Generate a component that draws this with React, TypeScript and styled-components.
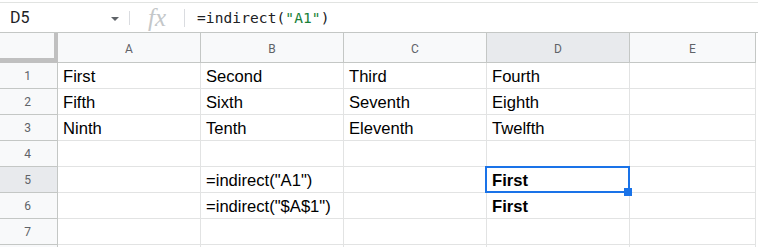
import styled, { createGlobalStyle } from 'styled-components'

const GlobalStyle = createGlobalStyle`
  body {
    margin: 0;
    background: #ffffff;
  }
`

const COLUMNS = ['A', 'B', 'C', 'D', 'E']
const COL_WIDTHS = [143, 143, 143, 143, 126]

const DATA: string[][] = [
  ['First', 'Second', 'Third', 'Fourth', ''],
  ['Fifth', 'Sixth', 'Seventh', 'Eighth', ''],
  ['Ninth', 'Tenth', 'Eleventh', 'Twelfth', ''],
  ['', '', '', '', ''],
  ['', '=indirect("A1")', '', 'First', ''],
  ['', '=indirect("$A$1")', '', 'First', ''],
  ['', '', '', '', ''],
]

const ACTIVE_ROW = 5
const ACTIVE_COL = 3

const Page = styled.div`
  width: 758px;
  height: 247px;
  overflow: hidden;
  background: #ffffff;
`

const FormulaBar = styled.div`
  margin-top: 2px;
  height: 29px;
  border-top: 1px solid #e1e3e1;
  display: flex;
  align-items: center;
`

const NameBox = styled.div`
  width: 129px;
  box-sizing: border-box;
  padding: 0 10px 0 10px;
  display: flex;
  align-items: center;
  justify-content: space-between;
  font-family: Roboto, 'Liberation Sans', sans-serif;
  font-size: 16px;
  color: #202124;
`

const Caret = styled.span`
  width: 0;
  height: 0;
  border-left: 4px solid transparent;
  border-right: 4px solid transparent;
  border-top: 4px solid #5f6368;
  margin-top: 2px;
`

const Divider = styled.div<{ $h: number }>`
  width: 1px;
  height: ${p => p.$h}px;
  background: #dadce0;
`

const FxBox = styled.div`
  width: 54px;
  text-align: center;
  font-family: 'Liberation Serif', serif;
  font-style: italic;
  font-size: 25px;
  color: #c4c7c9;
  line-height: 29px;
`

const FormulaText = styled.div`
  padding-left: 12px;
  font-family: 'DejaVu Sans Mono', 'Liberation Mono', monospace;
  font-size: 14.5px;
  color: #202124;
  letter-spacing: 0.1px;
`

const Str = styled.span`
  color: #188038;
`

const Sheet = styled.div`
  display: grid;
  grid-template-columns: 58px ${COL_WIDTHS.map(w => `${w}px`).join(' ')};
  grid-template-rows: 30px;
  grid-auto-rows: 26px;
  border-top: 1px solid #c4c7c5;
`

const Corner = styled.div`
  box-sizing: border-box;
  background: #f8f9fa;
  border-right: 4px solid #c0c0c0;
  border-bottom: 5px solid #c0c0c0;
`

const ColHead = styled.div<{ $active?: boolean }>`
  box-sizing: border-box;
  background: ${p => (p.$active ? '#e8eaed' : '#f8f9fa')};
  border-right: 1px solid #c4c7c5;
  border-bottom: 1px solid #c4c7c5;
  display: flex;
  align-items: center;
  justify-content: center;
  padding-top: 2px;
  font-family: Roboto, 'Liberation Sans', sans-serif;
  font-size: 12px;
  color: #5f6368;
`

const RowHead = styled.div<{ $active?: boolean }>`
  box-sizing: border-box;
  background: ${p => (p.$active ? '#e8eaed' : '#f8f9fa')};
  border-right: 1px solid #c4c7c5;
  border-bottom: 1px solid #c4c7c5;
  display: flex;
  align-items: center;
  justify-content: center;
  padding-right: 2px;
  font-family: Roboto, 'Liberation Sans', sans-serif;
  font-size: 12px;
  color: #5f6368;
`

const Cell = styled.div<{ $bold?: boolean }>`
  position: relative;
  box-sizing: border-box;
  border-right: 1px solid #e2e3e3;
  border-bottom: 1px solid #e2e3e3;
  display: flex;
  align-items: flex-end;
  padding: 0 5px 2px 5px;
  font-family: 'Liberation Sans', Arial, sans-serif;
  font-size: 16.6px;
  line-height: 19px;
  font-weight: ${p => (p.$bold ? 700 : 400)};
  color: #000000;
  white-space: nowrap;
`

const Selection = styled.div`
  position: absolute;
  top: -1px;
  left: -2px;
  right: -1px;
  bottom: -1px;
  border: 2px solid #1a73e8;
  z-index: 2;
`

const Handle = styled.div`
  position: absolute;
  right: -3px;
  bottom: -4px;
  width: 8px;
  height: 8px;
  background: #1a73e8;
  z-index: 3;
`

export default function App() {
  return (
    <Page>
      <GlobalStyle />
      <FormulaBar>
        <NameBox>
          <span>D5</span>
          <Caret />
        </NameBox>
        <Divider $h={14} />
        <FxBox>fx</FxBox>
        <Divider $h={18} />
        <FormulaText>
          =indirect(<Str>"A1"</Str>)
        </FormulaText>
      </FormulaBar>

      <Sheet>
        <Corner />
        {COLUMNS.map((c, i) => (
          <ColHead key={c} $active={i === ACTIVE_COL}>
            {c}
          </ColHead>
        ))}

        {DATA.map((row, r) => [
          <RowHead key={`h${r}`} $active={r + 1 === ACTIVE_ROW}>
            {r + 1}
          </RowHead>,
          ...row.map((value, c) => {
            const active = r + 1 === ACTIVE_ROW && c === ACTIVE_COL
            return (
              <Cell key={`${r}-${c}`} $bold={c === 3 && r >= 4}>
                {value}
                {active && (
                  <>
                    <Selection />
                    <Handle />
                  </>
                )}
              </Cell>
            )
          }),
        ])}

        {/* partly visible row 8 at the bottom edge */}
        <RowHead />
        {COLUMNS.map(c => (
          <Cell key={`last-${c}`} />
        ))}
      </Sheet>
    </Page>
  )
}
